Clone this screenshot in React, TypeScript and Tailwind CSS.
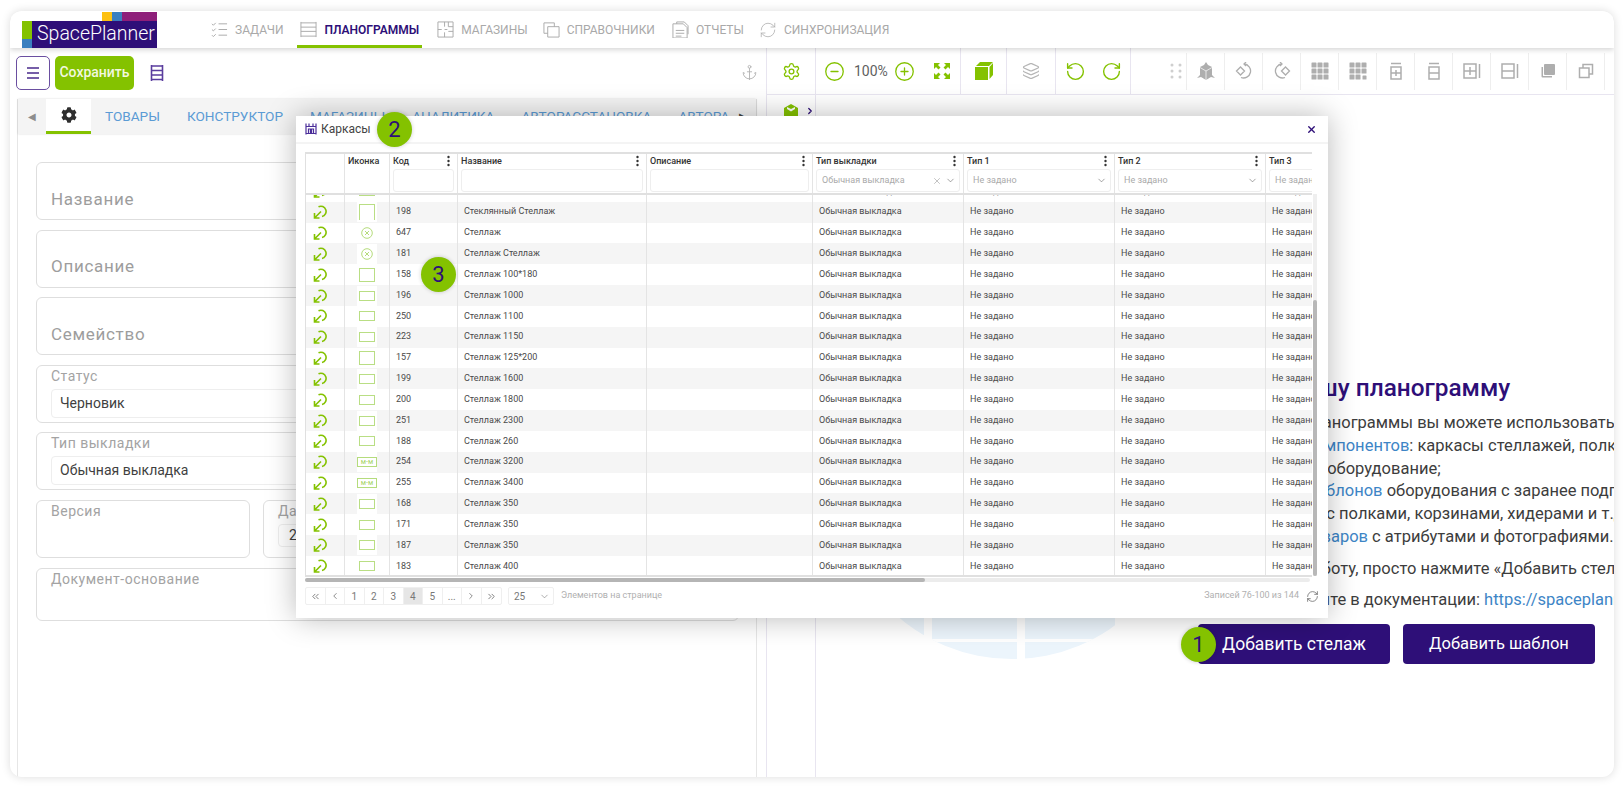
import { Anchor, ChevronDown, ChevronLeft, ChevronRight, ChevronsLeft, ChevronsRight, CircleMinus, CirclePlus, Layers, RefreshCw, RotateCcw, RotateCw, Settings, X } from "lucide-react";
import type { ReactNode } from "react";
import { FaCog } from "react-icons/fa";

type Thumb = "tall" | "mid" | "wide" | "x" | "mm";
type Row = { code: string; name: string; thumb: Thumb };

const rows: Row[] = [
  { code: "140", name: "Стеллаж Стеллаж", thumb: "wide" },
  { code: "198", name: "Стеклянный Стеллаж", thumb: "tall" },
  { code: "647", name: "Стеллаж", thumb: "x" },
  { code: "181", name: "Стеллаж Стеллаж", thumb: "x" },
  { code: "158", name: "Стеллаж 100*180", thumb: "mid" },
  { code: "196", name: "Стеллаж 1000", thumb: "wide" },
  { code: "250", name: "Стеллаж 1100", thumb: "wide" },
  { code: "223", name: "Стеллаж 1150", thumb: "wide" },
  { code: "157", name: "Стеллаж 125*200", thumb: "mid" },
  { code: "199", name: "Стеллаж 1600", thumb: "wide" },
  { code: "200", name: "Стеллаж 1800", thumb: "wide" },
  { code: "251", name: "Стеллаж 2300", thumb: "wide" },
  { code: "188", name: "Стеллаж 260", thumb: "wide" },
  { code: "254", name: "Стеллаж 3200", thumb: "mm" },
  { code: "255", name: "Стеллаж 3400", thumb: "mm" },
  { code: "168", name: "Стеллаж 350", thumb: "wide" },
  { code: "171", name: "Стеллаж 350", thumb: "wide" },
  { code: "187", name: "Стеллаж 350", thumb: "wide" },
  { code: "183", name: "Стеллаж 400", thumb: "wide" },
];

const gridCols = "grid grid-cols-[39px_45px_68px_189px_166px_151px_151px_151px_151px]";

function Ico({ w = 17, h = 17, vb = "0 0 18 18", children, className = "" }: { w?: number; h?: number; vb?: string; children: ReactNode; className?: string }) {
  return (
    <svg className={className} fill="none" height={h} stroke="currentColor" strokeWidth="1" viewBox={vb} width={w}>
      {children}
    </svg>
  );
}

function Logo() {
  return (
    <div className="relative h-[36px] w-[135px] shrink-0">
      <div className="absolute left-[80px] top-0 h-[9px] w-[10px] bg-[#fdc010]" />
      <div className="absolute left-[90px] top-0 h-[9px] w-[10px] bg-[#3a7fbf]" />
      <div className="absolute left-[100px] top-0 h-[9px] w-[35px] bg-[#8e1f7a]" />
      <div className="absolute left-0 top-[9px] h-[18px] w-[10px] bg-[#84c200]" />
      <div className="absolute left-0 top-[27px] h-[9px] w-[10px] bg-[#3a7fbf]" />
      <div className="absolute left-[10px] top-[9px] flex h-[27px] w-[125px] items-center bg-[#2e0f78] pl-[5px] text-[19.5px] font-light text-white">
        SpacePlanner
      </div>
    </div>
  );
}

function NavItem({ icon, label, active = false, className = "" }: { icon: ReactNode; label: string; active?: boolean; className?: string }) {
  return (
    <div className={`flex h-full items-center gap-[7px] text-[12px] ${active ? "border-b-[3px] border-[#84c200] px-[3px] pt-[3px] font-semibold text-[#2e0f78]" : "text-[#a9a9a9]"} ${className}`}>
      <span className={active ? "text-[#a9a9a9]" : ""}>{icon}</span>
      {label}
    </div>
  );
}

function Header() {
  return (
    <header className="relative z-10 flex h-[37px] shrink-0 items-center bg-white pl-[12px] shadow-[0_2px_5px_rgba(0,0,0,0.16)]">
      <Logo />
      <nav className="ml-[54px] flex h-full items-center">
        <NavItem
          icon={
            <Ico>
              <path d="M1 3l1.5 1.5L5 2M1 9l1.5 1.5L5 8M1 15l1.5 1.5L5 14M8 3h9M8 9h9M8 15h9" />
            </Ico>
          }
          label="ЗАДАЧИ"
        />
        <NavItem
          active
          className="ml-[14px]"
          icon={
            <Ico>
              <path d="M1 1v16M17 1v16M1 2h16M1 6.500h16M1 11h16M1 16h16" />
            </Ico>
          }
          label="ПЛАНОГРАММЫ"
        />
        <NavItem
          className="ml-[15px]"
          icon={
            <Ico>
              <path d="M1 1h16v16H1zM1 9h4M8 1v5M8 12v5M8 9h3M12 1v5h5M12 11h5" />
            </Ico>
          }
          label="МАГАЗИНЫ"
        />
        <NavItem
          className="ml-[15px]"
          icon={
            <Ico>
              <path d="M5 6h12v11H5zM5 13H1V2h11v4" />
            </Ico>
          }
          label="СПРАВОЧНИКИ"
        />
        <NavItem
          className="ml-[17px]"
          icon={
            <Ico>
              <path d="M1 3h11l4 4v11H1zM5 3V1h8l4 4v9M4 10h9M4 13h9M4 16h6" />
            </Ico>
          }
          label="ОТЧЕТЫ"
        />
        <NavItem className="ml-[15px]" icon={<RefreshCw size={18} strokeWidth={1} />} label="СИНХРОНИЗАЦИЯ" />
      </nav>
    </header>
  );
}

function Field({ label }: { label: string }) {
  return (
    <div className="flex h-[58px] items-end rounded-[6px] border border-[#dedede] pb-[7px] pl-[14px] text-[17px] tracking-[0.7px] text-[#9d9d9d]">
      {label}
    </div>
  );
}

function SelectField({ label, value }: { label: string; value: string }) {
  return (
    <div className="h-[58px] rounded-[6px] border border-[#dedede] px-[14px]">
      <div className="text-[14px] leading-[20px] tracking-[0.5px] text-[#a3a3a3]">{label}</div>
      <div className="mt-[3px] flex h-[29px] items-center rounded-[4px] border border-[#eeeeee] pl-[8px] text-[14px] text-[#3f3f3f]">{value}</div>
    </div>
  );
}

function LeftPanel() {
  return (
    <section className="flex w-[747px] shrink-0 flex-col">
      <div className="flex h-[51px] shrink-0 items-center pb-[2px] pl-[6px]">
        <button className="flex h-[34px] w-[34px] items-center justify-center rounded-[5px] border border-[#6a4ea0] text-[#4a2a8c]" type="button">
          <Ico w={14} h={12} vb="0 0 14 12">
            <path d="M1 1h12M1 6h12M1 11h12" strokeWidth="1.4" />
          </Ico>
        </button>
        <button className="ml-[5px] h-[34px] w-[79px] rounded-[5px] bg-[#84c200] text-[14px] font-medium text-[#f2f8df]" type="button">
          Сохранить
        </button>
        <span className="ml-[16px] text-[#5a3d9e]">
          <Ico w={14} h={18} vb="0 0 14 18">
            <path d="M1.500 1v16M12.500 1v16M1.500 2h11M1.500 6.500h11M1.500 11h11M1.500 15.500h11" strokeWidth="1.6" />
          </Ico>
        </span>
        <Anchor className="ml-auto mr-[-1px] text-[#b4b4b4]" size={17} strokeWidth={1.3} />
      </div>
      <div className="ml-[7px] flex min-h-0 flex-1 flex-col border-x border-[#e6e6e6]">
        <div className="flex h-[35px] shrink-0 items-stretch whitespace-nowrap bg-[#f4f4f4] text-[13.6px] text-[#5b9bd5] shadow-[0_0_2px_rgba(0,0,0,0.15)]">
          <span className="flex w-[28px] items-center justify-center text-[10px] text-[#8d8d8d]">◀</span>
          <span className="flex w-[45px] items-center justify-center border-b-[3px] border-[#84c200] bg-white text-[#2f2f2f]">
            <FaCog size={16} />
          </span>
          <span className="ml-[14px] flex items-center">ТОВАРЫ</span>
          <span className="ml-[27px] flex items-center">КОНСТРУКТОР</span>
          <span className="ml-[27px] flex items-center">МАГАЗИНЫ</span>
          <span className="ml-[27px] flex items-center">АНАЛИТИКА</span>
          <span className="ml-[27px] flex items-center">АВТОРАССТАНОВКА</span>
          <span className="ml-[27px] flex items-center">АВТОРА</span>
          <span className="ml-[10px] flex items-center text-[10px] text-[#444]">▶</span>
        </div>
        <div className="flex flex-col gap-[9.6px] pl-[18px] pr-[17px] pt-[28px]">
          <Field label="Название" />
          <Field label="Описание" />
          <Field label="Семейство" />
          <SelectField label="Статус" value="Черновик" />
          <SelectField label="Тип выкладки" value="Обычная выкладка" />
          <div className="flex gap-[13px]">
            <div className="h-[58px] w-[214px] rounded-[6px] border border-[#dedede] pl-[14px] text-[14px] tracking-[0.5px] text-[#a3a3a3]">Версия</div>
            <div className="h-[58px] flex-1 rounded-[6px] border border-[#dedede] px-[14px]">
              <div className="text-[14px] tracking-[0.5px] text-[#a3a3a3]">Дата</div>
              <div className="mt-[2px] rounded-[4px] border border-[#eeeeee] pl-[10px] text-[14px] text-[#3f3f3f]">2</div>
            </div>
          </div>
          <div className="h-[53px] rounded-[6px] border border-[#dedede] pl-[14px] text-[14px] tracking-[0.5px] text-[#a3a3a3]">Документ-основание</div>
        </div>
      </div>
    </section>
  );
}

function Grid3({ extra = false }: { extra?: boolean }) {
  const cells: [number, number][] = [];
  for (let y = 0; y < 3; y++) for (let x = 0; x < 3; x++) if (!(extra && x === 2 && y === 2)) cells.push([x, y]);
  return (
    <svg fill="currentColor" height="18" viewBox="0 0 18 18" width="18">
      {cells.map(([x, y]) => (
        <rect height="5" key={`${x}-${y}`} rx="0.6" width="5" x={x * 6 + 0.5} y={y * 6 + 0.5} />
      ))}
      {extra ? <rect height="4" rx="0.6" width="4" x="13.5" y="13.5" /> : null}
    </svg>
  );
}

const toolIcons: ReactNode[] = [
  <svg fill="currentColor" height="18" key="cube" viewBox="0 0 18 18" width="18">
    <path d="M9 0l2 3 4 2v8l3 3-4-1-5 3-5-3-4 1 3-3V5l4-2z" />
    <path d="M3 5.500L9 9l6-3.500M9 9v9" fill="none" stroke="#fff" strokeWidth="0.7" />
  </svg>,
  <Ico key="rl" w={18} h={18}>
    <path d="M1.500 9l4-4 4 4-4 4zM9 2a7 7 0 1 1-3 13.500M11 0L9 2l2 2" strokeWidth="1.3" />
  </Ico>,
  <Ico key="rr" w={18} h={18}>
    <path d="M8.500 9l4-4 4 4-4 4zM9 2a7 7 0 1 0 3 13.500M7 0l2 2-2 2" strokeWidth="1.3" />
  </Ico>,
  <Grid3 key="g1" />,
  <Grid3 extra key="g2" />,
  <Ico key="a" w={14} h={18} vb="0 0 14 18">
    <path d="M2 1.500h10M2 5h10v12H2zM2 11h10M7 8v6" strokeWidth="1.5" />
  </Ico>,
  <Ico key="b" w={14} h={18} vb="0 0 14 18">
    <path d="M2 1.500h10M2 5h10v12H2zM2 11h10" strokeWidth="1.5" />
  </Ico>,
  <Ico key="c" w={18} h={18}>
    <path d="M1 2h12v14H1zM1 9h12M7 5v8M16.500 2v14" strokeWidth="1.5" />
  </Ico>,
  <Ico key="d" w={18} h={18}>
    <path d="M1 2h12v14H1zM1 9h12M16.500 2v14" strokeWidth="1.5" />
  </Ico>,
  <svg fill="currentColor" height="16" key="e" viewBox="0 0 16 16" width="16">
    <path d="M5 1h9a1 1 0 0 1 1 1v9a1 1 0 0 1-1 1H5a1 1 0 0 1-1-1V2a1 1 0 0 1 1-1z" />
    <path d="M3 4v9h9v1.500H2.500a1 1 0 0 1-1-1V4z" />
  </svg>,
  <Ico key="f" w={16} h={16} vb="0 0 16 16">
    <path d="M1.500 5h9.500v9.500H1.500zM5 5V1.500h9.500V11H11" strokeWidth="1.5" />
  </Ico>,
];

function ToolbarCell({ children, className = "" }: { children: ReactNode; className?: string }) {
  return <div className={`flex h-full items-center justify-center border-r border-[#e8e5f0] ${className}`}>{children}</div>;
}

function Toolbar() {
  return (
    <div className="flex h-[47px] shrink-0 items-stretch border-b border-[#e8e5f0] text-[#84c200]">
      <ToolbarCell className="w-[49px]">
        <Settings size={19} strokeWidth={1.7} />
      </ToolbarCell>
      <ToolbarCell className="w-[145px] !justify-start pl-[8px]">
        <CircleMinus size={21} strokeWidth={1.5} />
        <span className="ml-[9px] w-[33px] text-[14px] text-[#5f5f5f]">100%</span>
        <span className="ml-[7px]">
          <CirclePlus size={21} strokeWidth={1.5} />
        </span>
        <svg className="ml-[19px]" fill="currentColor" height="16" viewBox="0 0 16 16" width="16">
          <path d="M0 0h6L4 2l2.500 2.500-2 2L2 4 0 6zM16 0v6l-2-2-2.500 2.500-2-2L12 2l-2-2zM0 16v-6l2 2 2.500-2.500 2 2L4 14l2 2zM16 16h-6l2-2-2.500-2.500 2-2L14 12l2-2z" />
        </svg>
      </ToolbarCell>
      <ToolbarCell className="w-[46px]">
        <svg fill="currentColor" height="20" viewBox="0 0 20 20" width="20">
          <path d="M1 6h13v13H1zM2 5l4-4h13l-4 4zM15.500 6l3.500-4v12l-3.500 4z" />
        </svg>
      </ToolbarCell>
      <ToolbarCell className="w-[49px] text-[#b5b5b5]">
        <Layers size={18} strokeWidth={1.6} />
      </ToolbarCell>
      <ToolbarCell className="w-[75px] gap-[15px]">
        <RotateCcw size={21} strokeWidth={1.6} />
        <RotateCw size={21} strokeWidth={1.6} />
      </ToolbarCell>
      <div className="flex h-[37px] items-center self-center pl-[34px] text-[#aeaeae]">
        <div className="flex h-full w-[22px] items-center justify-center border-r border-[#eeeeee]">
          <svg fill="#cfcfcf" height="18" viewBox="0 0 12 18" width="12">
            <circle cx="2" cy="3" r="1.5" />
            <circle cx="10" cy="3" r="1.5" />
            <circle cx="2" cy="9" r="1.5" />
            <circle cx="10" cy="9" r="1.5" />
            <circle cx="2" cy="15" r="1.5" />
            <circle cx="10" cy="15" r="1.5" />
          </svg>
        </div>
        {toolIcons.map((icon, i) => (
          <div className="flex h-full w-[38px] shrink-0 items-center justify-center border-r border-[#eeeeee]" key={i}>
            {icon}
          </div>
        ))}
      </div>
    </div>
  );
}

function RightPanel() {
  return (
    <section className="ml-[9px] flex min-w-0 flex-1 flex-col border-l border-[#e8e5f0]">
      <Toolbar />
      <div className="flex min-h-0 flex-1">
        <div className="flex w-[49px] shrink-0 gap-[5px] border-r border-[#e8e5f0] pl-[15px] pt-[8px] text-[#84c200]">
          <svg fill="currentColor" height="18" viewBox="0 0 18 18" width="18">
            <path d="M9 1l7 4v8l-7 4-7-4V5zM9 6L5 4v2l4 2.500L13 6V4z" />
          </svg>
          <ChevronRight className="mt-[3px] text-[#2e0f78]" size={10} strokeWidth={3} />
        </div>
        <div className="relative min-w-0 flex-1 overflow-hidden whitespace-nowrap pl-[382px] pt-[278px] text-[16.5px] leading-[22.8px] text-[#3d3d3d]">
          <svg className="absolute left-[80px] top-[330px]" height="240" viewBox="0 0 360 240" width="360">
            <defs>
              <clipPath id="disc">
                <circle cx="116" cy="59" r="175" />
              </clipPath>
            </defs>
            <g clipPath="url(#disc)" fill="#ecf5fc">
              <rect height="60" width="28" x="0" y="180" />
              <rect height="60" width="85" x="36" y="180" />
              <rect height="60" width="90" x="129" y="180" />
              <rect fill="#fff" height="3" width="360" x="0" y="214" />
            </g>
          </svg>
          <div className="relative -ml-[22px] h-[30px] text-[24.4px] font-medium leading-[30px] text-[#2e0f78]">Создайте вашу планограмму</div>
          <div className="relative mt-[9px]">
            <div className="-ml-[7px]">При создании планограммы вы можете использовать:</div>
            <div className="-ml-[2px]">
              — <span className="text-[#3d85c6]">библиотеку компонентов</span>: каркасы стеллажей, полки и прочее
            </div>
            <div className="ml-[55px]">торговое оборудование;</div>
            <div className="-ml-[4px]">
              — <span className="text-[#3d85c6]">библиотеку шаблонов</span> оборудования с заранее подготовленными
            </div>
            <div className="-ml-[8px]">конфигурациями с полками, корзинами, хидерами и т.д.;</div>
            <div className="ml-[25px]">
              — <span className="text-[#3d85c6]">каталог товаров</span> с атрибутами и фотографиями.
            </div>
            <div className="-ml-[6px] mt-[9px]">Чтобы начать работу, просто нажмите «Добавить стеллаж»</div>
            <div className="-ml-[2px] mt-[8px]">
              Подробнее читайте в документации: <span className="text-[#3d85c6]">https://spaceplanner.ru/docs</span>
            </div>
          </div>
          <div className="relative mt-[13px] flex gap-[13px]">
            <button className="h-[40px] w-[192px] rounded-[4px] bg-[#2e0f78] text-[17.5px] text-white" type="button">
              Добавить стелаж
            </button>
            <button className="h-[40px] w-[192px] rounded-[4px] bg-[#2e0f78] text-[16.5px] text-white" type="button">
              Добавить шаблон
            </button>
          </div>
        </div>
      </div>
    </section>
  );
}

function ActionIcon() {
  return (
    <svg fill="none" height="14" stroke="#84c200" strokeWidth="1.6" viewBox="0 0 15 14" width="15">
      <path d="M5.500 1.800A5.200 5.200 0 1 1 9 11.500" />
      <path d="M8 6.500L1.500 13M1.500 8v5h5" />
    </svg>
  );
}

function ThumbIcon({ kind }: { kind: Thumb }) {
  if (kind === "x") {
    return (
      <svg fill="none" height="12" stroke="#b5dc7c" viewBox="0 0 12 12" width="12">
        <circle cx="6" cy="6" r="5.3" />
        <path d="M4 4l4 4M8 4l-4 4" />
      </svg>
    );
  }
  if (kind === "mm") {
    return (
      <div className="flex h-[10px] w-[20px] items-center justify-center border border-[#b5dc7c] text-[7px] leading-none text-[#a6d468]">
        м-м
      </div>
    );
  }
  const size = kind === "tall" ? "h-[16px] border-b-0" : kind === "mid" ? "h-[14px]" : "h-[10px]";
  return <div className={`w-[16px] border border-[#b9de84] ${size}`} />;
}

function HeadCell({ label, children, dots = true }: { label: string; children?: ReactNode; dots?: boolean }) {
  return (
    <div className="relative border-r border-[#e4e4e4] px-[3px]">
      <div className="flex h-[15px] items-center text-[9px] font-medium text-[#333]">{label}</div>
      {dots ? (
        <svg className="absolute right-[7px] top-[1px]" fill="#333" height="12" viewBox="0 0 3 12" width="3">
          <circle cx="1.5" cy="2" r="1.2" />
          <circle cx="1.5" cy="6" r="1.2" />
          <circle cx="1.5" cy="10" r="1.2" />
        </svg>
      ) : null}
      {children}
    </div>
  );
}

function Filter({ value, clear = false }: { value?: string; clear?: boolean }) {
  return (
    <div className="flex h-[23px] items-center rounded-[3px] border border-[#eeeeee] bg-white pl-[5px] pr-[3px] text-[9px] text-[#aaaaaa]">
      <span className="flex-1 overflow-hidden whitespace-nowrap">{value}</span>
      {clear ? <X className="mr-[3px] text-[#888]" size={10} strokeWidth={1.2} /> : null}
      {value ? <ChevronDown className="text-[#666]" size={11} strokeWidth={1.3} /> : null}
    </div>
  );
}

function Pager() {
  const items: ReactNode[] = [
    <ChevronsLeft key="f" size={11} />,
    <ChevronLeft key="p" size={10} />,
    "1",
    "2",
    "3",
    "4",
    "5",
    "...",
    <ChevronRight key="n" size={10} />,
    <ChevronsRight key="l" size={11} />,
  ];
  return (
    <div className="flex h-[18px] rounded-[2px] border border-[#efefef] text-[10px] text-[#777]">
      {items.map((item, i) => (
        <span className={`flex w-[19.5px] items-center justify-center border-r border-[#efefef] last:border-r-0 ${i === 5 ? "bg-[#e6e6e6]" : ""}`} key={i}>
          {item}
        </span>
      ))}
    </div>
  );
}

function Modal() {
  return (
    <div className="absolute left-[296px] top-[116px] z-20 flex h-[502px] w-[1032px] flex-col bg-white shadow-[0_0_28px_rgba(0,0,0,0.28)]">
      <div className="flex h-[28px] shrink-0 items-center border-b-2 border-[#f4f4f4] pl-[9px] pr-[11px] text-[12px] text-[#444]">
        <span className="text-[#4b2e9a]">
          <Ico w={12} h={12} vb="0 0 12 12">
            <path d="M1 .500v11M11 .500v11M1 3.500h10M1 10.500h10M4 .500v3M8 .500v3M3.500 10.500V6h2v4.500M6.500 10.500V6h2v4.500" strokeWidth="1.2" />
          </Ico>
        </span>
        <span className="ml-[4px]">Каркасы</span>
        <X className="ml-auto text-[#2e0f78]" size={11} strokeWidth={3} />
      </div>
      <div className="relative ml-[9px] mt-[8px] h-[424px] w-[1014px] text-[9px] text-[#4a4a4a]">
        <div className="h-[425px] w-[1007px] overflow-hidden border-b-2 border-l border-t-2 border-[#e0e0e0]">
          <div className={`${gridCols} relative z-10 h-[41px] border-b-2 border-[#e0e0e0] bg-white`}>
            <HeadCell dots={false} label="" />
            <HeadCell dots={false} label="Иконка" />
            <HeadCell label="Код">
              <Filter />
            </HeadCell>
            <HeadCell label="Название">
              <Filter />
            </HeadCell>
            <HeadCell label="Описание">
              <Filter />
            </HeadCell>
            <HeadCell label="Тип выкладки">
              <Filter clear value="Обычная выкладка" />
            </HeadCell>
            <HeadCell label="Тип 1">
              <Filter value="Не задано" />
            </HeadCell>
            <HeadCell label="Тип 2">
              <Filter value="Не задано" />
            </HeadCell>
            <HeadCell label="Тип 3">
              <Filter value="Не задано" />
            </HeadCell>
          </div>
          <div className="-mt-[14px]">
            {rows.map((row, i) => (
              <div className={`${gridCols} h-[20.83px] items-stretch whitespace-nowrap ${i % 2 === 1 ? "bg-[#f5f5f5]" : "bg-white"}`} key={row.code}>
                <div className="flex items-center border-r border-[#e4e4e4] pl-[7px]">
                  <ActionIcon />
                </div>
                <div className="flex items-center justify-center border-r border-[#e4e4e4]">
                  <div className="flex h-[20px] w-[20px] items-center justify-center bg-white">
                    <ThumbIcon kind={row.thumb} />
                  </div>
                </div>
                <div className="flex items-center border-r border-[#e4e4e4] pl-[6px]">{row.code}</div>
                <div className="flex items-center border-r border-[#e4e4e4] pl-[6px]">{row.name}</div>
                <div className="border-r border-[#e4e4e4]" />
                <div className="flex items-center border-r border-[#e4e4e4] pl-[6px]">Обычная выкладка</div>
                <div className="flex items-center border-r border-[#e4e4e4] pl-[6px]">Не задано</div>
                <div className="flex items-center border-r border-[#e4e4e4] pl-[6px]">Не задано</div>
                <div className="flex items-center overflow-hidden pl-[6px]">Не задано</div>
              </div>
            ))}
          </div>
        </div>
        <div className="absolute left-[1008px] top-[42px] h-[382px] w-[4px] bg-[#efefef]">
          <div className="absolute bottom-0 left-0 h-[276px] w-[4px] rounded-full bg-[#b8b8b8]" />
        </div>
        <div className="mt-[1px] h-[4px] w-[1005px] rounded-full bg-[#ececec]">
          <div className="h-[4px] w-[620px] rounded-full bg-[#b5b5b5]" />
        </div>
        <div className="mt-[5px] flex items-center">
          <Pager />
          <div className="ml-[6px] flex h-[18px] w-[46px] items-center justify-between rounded-[2px] border border-[#efefef] pl-[5px] pr-[3px] text-[10px] text-[#777]">
            25
            <ChevronDown size={11} strokeWidth={1.3} />
          </div>
          <span className="ml-[7px] text-[9px] text-[#b0b0b0]">Элементов на странице</span>
          <span className="ml-auto text-[9px] text-[#b0b0b0]">Записей 76-100 из 144</span>
          <RefreshCw className="ml-[7px] text-[#666]" size={13} strokeWidth={1.4} />
        </div>
      </div>
    </div>
  );
}

function Badge({ n, className }: { n: number; className: string }) {
  return (
    <div className={`absolute z-30 flex h-[35px] w-[35px] items-center justify-center rounded-full bg-[#84c200] text-[22px] text-[#2e0f78] shadow-[0_0_4px_rgba(0,0,0,0.2)] ${className}`}>
      {n}
    </div>
  );
}

export default function App() {
  return (
    <div className="relative h-[786px] w-[1624px] overflow-hidden bg-white font-['Roboto',sans-serif]">
      <div className="absolute left-[10px] top-[11px] flex h-[766px] w-[1604px] flex-col overflow-hidden rounded-[12px] bg-white shadow-[0_0_10px_rgba(0,0,0,0.14)]">
        <Header />
        <main className="flex min-h-0 flex-1">
          <LeftPanel />
          <RightPanel />
        </main>
      </div>
      <Modal />
      <Badge className="left-[377px] top-[112px]" n={2} />
      <Badge className="left-[421px] top-[257px]" n={3} />
      <Badge className="left-[1181px] top-[627px]" n={1} />
    </div>
  );
}
